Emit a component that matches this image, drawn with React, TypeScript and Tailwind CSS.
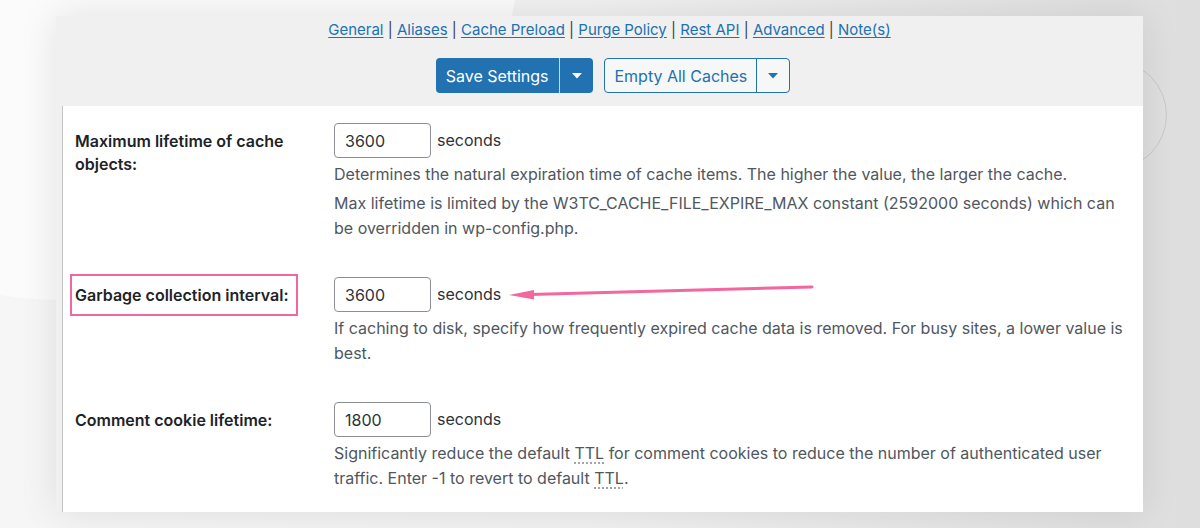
import React from 'react';

const links = ['General', 'Aliases', 'Cache Preload', 'Purge Policy', 'Rest API', 'Advanced', 'Note(s)'];

function Caret({ color }: { color: string }) {
  return (
    <svg width="10" height="6" viewBox="0 0 10 6" className="block">
      <polygon points="0,0 10,0 5,5.5" fill={color} />
    </svg>
  );
}

function Ttl() {
  return (
    <abbr title="Time to Live" className="underline decoration-dotted decoration-[#8c8f94] underline-offset-[4px]">
      TTL
    </abbr>
  );
}

function Row({ label, value, children, boxed }: { label: React.ReactNode; value: string; children: React.ReactNode; boxed?: boolean }) {
  return (
    <div className="flex pt-[17px] pb-[19px]">
      <div className="w-[271px] shrink-0 pl-[12px] pt-[7px] pr-[20px] text-[16px] font-semibold leading-[23px] text-[#1d2327]">
        <span className="relative inline-block">
          {label}
          {boxed && <span className="absolute -left-[5px] -right-[10px] -top-[10px] -bottom-[9px] border-2 border-[#f3679f]" />}
        </span>
      </div>
      <div className="w-[800px] text-[16px] leading-[25px] text-[#50575e]">
        <div className="flex items-center gap-[6px]">
          <input
            readOnly
            value={value}
            className="h-[35px] w-[97px] rounded-[4px] border border-[#8c8f94] bg-white px-[10px] text-[16px] text-[#2c3338] outline-none"
          />
          <span className="text-[#2c3338]">seconds</span>
        </div>
        {children}
      </div>
    </div>
  );
}

export default function App() {
  return (
    <div className="relative h-[528px] w-[1200px] overflow-hidden bg-linear-to-r from-[#f6f6f6] via-[#f1f1f1] to-[#dedede] font-['Inter',sans-serif]">
      {/* backdrop decoration */}
      <div className="absolute -left-[300px] -top-[420px] h-[720px] w-[820px] rounded-full bg-[#fbfbfb]" />
      <div className="absolute left-[1057px] top-[60px] h-[110px] w-[110px] rounded-full border border-[#c9c9c9]" />

      <div className="relative ml-[56px] mt-[16px] flex h-[496px] w-[1087px] flex-col bg-[#f0f0f1] shadow-[0_0_36px_rgba(0,0,0,0.10)]">
        {/* header */}
        <div className="flex h-[90px] shrink-0 flex-col items-center pl-[20px] pt-[4px]">
          <div className="text-[15px] leading-[20px] text-[#3c434a]">
            {links.map((l, i) => (
              <React.Fragment key={l}>
                {i > 0 && <span> | </span>}
                <a href="#" className="text-[#2271b1] underline underline-offset-[2px]">{l}</a>
              </React.Fragment>
            ))}
          </div>
          <div className="ml-[7px] mt-[18px] flex gap-[11px]">
            <div className="flex h-[35px] overflow-hidden rounded-[4px] bg-[#2271b1] text-[16px] text-white">
              <span className="flex items-center pl-[10px] pr-[11px]">Save Settings</span>
              <span className="flex w-[34px] items-center justify-center border-l border-[#c7d9ec]">
                <Caret color="#ffffff" />
              </span>
            </div>
            <div className="flex h-[35px] overflow-hidden rounded-[4px] border border-[#2271b1] bg-[#f6f7f7] text-[16px] text-[#2271b1]">
              <span className="flex items-center px-[9px]">Empty All Caches</span>
              <span className="flex w-[33px] items-center justify-center border-l border-[#2271b1]">
                <Caret color="#2271b1" />
              </span>
            </div>
          </div>
        </div>

        {/* settings panel */}
        <div className="ml-[6px] flex-1 border-l border-[#c3c4c7] bg-white">
          <Row label={<>Maximum lifetime of cache<br />objects:</>} value="3600">
            <p className="mt-[4px]">Determines the natural expiration time of cache items. The higher the value, the larger the cache.</p>
            <p className="mt-[4px]">
              Max lifetime is limited by the W3TC_CACHE_FILE_EXPIRE_MAX constant (2592000 seconds) which can<br />
              be overridden in wp-config.php.
            </p>
          </Row>
          <Row label="Garbage collection interval:" value="3600" boxed>
            <p className="mt-[4px]">
              If caching to disk, specify how frequently expired cache data is removed. For busy sites, a lower value is<br />
              best.
            </p>
          </Row>
          <Row label="Comment cookie lifetime:" value="1800">
            <p className="mt-[4px]">
              Significantly reduce the default <Ttl /> for comment cookies to reduce the number of authenticated user<br />
              traffic. Enter -1 to revert to default <Ttl />.
            </p>
          </Row>
        </div>
      </div>

      {/* annotation arrow */}
      <svg className="pointer-events-none absolute left-0 top-0" width="1200" height="528">
        <line x1="812" y1="287" x2="530" y2="294.4" stroke="#f3679f" strokeWidth="3" strokeLinecap="round" />
        <polygon points="509,295 534,290 534,299.4" fill="#f3679f" />
      </svg>
    </div>
  );
}
